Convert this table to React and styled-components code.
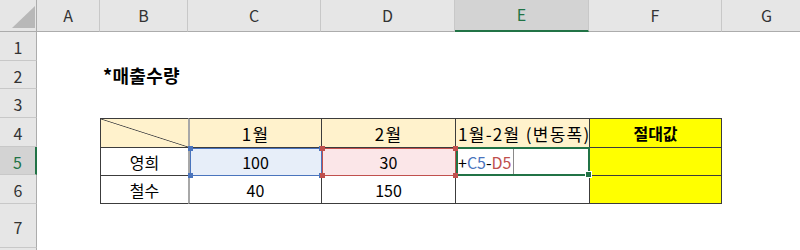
import React from 'react';
import styled, { createGlobalStyle } from 'styled-components';

const FONT = '"Noto Sans CJK KR", "Noto Sans", sans-serif';
const HEAD_FILL = '#FFF2CC';
const YELLOW = '#FFFF00';
const GREEN = '#217346';
const LINE = '1px solid #3c3c3c';
const SOFT_LINE = '2px solid #a8a8a8';
const BLUE = '#4a74bd';
const RED = '#c0504d';

const Global = createGlobalStyle`
  html, body { margin: 0; padding: 0; background: #fff; overflow: hidden; }
  body { font-family: ${FONT}; }
`;

const Sheet = styled.div`
  display: grid;
  grid-template-columns: 37px 63px 88px 133px 134px 134px 133px 90px;
  grid-template-rows: 32px 29px 28px 29px 29px 28px 29px 44px 29px;
  width: 800px;
  height: 250px;
  overflow: hidden;
  font-family: ${FONT};
`;

const Corner = styled.div`
  display: flex;
  justify-content: flex-end;
  align-items: flex-end;
  padding: 0 1px 3px 0;
  background: #e6e6e6;
  border-right: 1px solid #acacac;
  border-bottom: 1px solid #acacac;
`;

const ColHeader = styled.div`
  display: flex;
  align-items: center;
  justify-content: center;
  padding-bottom: 2px;
  background: ${p => (p.$selected ? '#d3d3d3' : '#e6e6e6')};
  color: ${p => (p.$selected ? GREEN : '#333')};
  font-size: 16px;
  border-right: 1px solid #c8c8c8;
  border-bottom: ${p => (p.$selected ? `2px solid ${GREEN}` : '1px solid #acacac')};
`;

const RowHeader = styled.div`
  display: flex;
  align-items: center;
  justify-content: center;
  padding-top: 2px;
  background: ${p => (p.$selected ? '#d3d3d3' : '#e6e6e6')};
  color: ${p => (p.$selected ? GREEN : '#333')};
  font-size: 16px;
  border-bottom: 1px solid #c8c8c8;
  border-right: ${p => (p.$selected ? `2px solid ${GREEN}` : '1px solid #acacac')};
`;

const Cell = styled.div`
  position: relative;
  display: flex;
  align-items: center;
  justify-content: ${p => (p.$align === 'left' ? 'flex-start' : 'center')};
  padding: 0 2px;
  min-width: 0;
  white-space: nowrap;
  color: #000;
  font-size: ${p => (p.$wide ? '17px' : '16px')};
  letter-spacing: ${p => (p.$wide ? '1.3px' : '0')};
  font-weight: ${p => (p.$bold ? 700 : 400)};
  background-color: ${p => p.$fill || 'transparent'};
  border-top: ${p => p.$top || 'none'};
  border-left: ${p => p.$left || 'none'};
  border-right: ${p => p.$right || 'none'};
  border-bottom: ${p => p.$bottom || 'none'};
`;

const DiagonalCell = styled(Cell)`
  background-image: linear-gradient(
    to top right,
    transparent calc(50% - 0.8px),
    #4a4a4a 50%,
    transparent calc(50% + 0.8px)
  );
`;

const Title = styled.span`
  padding-left: 1px;
  font-size: 18px;
  font-weight: 700;
  letter-spacing: 0.3px;
`;

const RefFrame = styled.span`
  position: absolute;
  top: 0;
  left: 0;
  right: -1px;
  bottom: -1px;
  border: 1px solid ${p => p.$color};
  z-index: 2;
  pointer-events: none;
`;

const Knob = styled.span`
  position: absolute;
  width: 5px;
  height: 5px;
  background: ${p => p.$color};
  ${p => p.$v}: -3px;
  ${p => p.$h}: -3px;
`;

const ActiveFrame = styled.span`
  position: absolute;
  top: -1px;
  left: 0;
  right: -1px;
  bottom: -1px;
  border: 2px solid ${GREEN};
  z-index: 1;
  pointer-events: none;
`;

const FillHandle = styled.span`
  position: absolute;
  right: -4px;
  bottom: -4px;
  width: 5px;
  height: 5px;
  background: ${GREEN};
  border: 1px solid #fff;
`;

const Token = styled.span`
  color: ${p => p.$color || '#000'};
`;

const Caret = styled.span`
  display: inline-block;
  width: 1px;
  height: 26px;
  margin-left: 2px;
  background: #8a8a8a;
`;

const Reference = ({ color }) => (
  <RefFrame $color={color}>
    <Knob $color={color} $v="top" $h="left" />
    <Knob $color={color} $v="top" $h="right" />
    <Knob $color={color} $v="bottom" $h="left" />
    <Knob $color={color} $v="bottom" $h="right" />
  </RefFrame>
);

const COLS = ['A', 'B', 'C', 'D', 'E', 'F', 'G'];
const ROWS = [1, 2, 3, 4, 5, 6, 7, 8];

const cells = {
  B2: { title: '*매출수량' },
  B4: { diagonal: true, fill: HEAD_FILL },
  C4: { text: '1월', fill: HEAD_FILL, wide: true },
  D4: { text: '2월', fill: HEAD_FILL, wide: true },
  E4: { text: '1월-2월 (변동폭)', fill: HEAD_FILL, align: 'left', wide: true },
  F4: { text: '절대값', fill: YELLOW, bold: true },
  B5: { text: '영희' },
  C5: { text: '100', fill: '#e7eef9', ref: BLUE },
  D5: { text: '30', fill: '#fbe6e8', ref: RED },
  E5: { formula: true, align: 'left' },
  F5: { fill: YELLOW },
  B6: { text: '철수' },
  C6: { text: '40' },
  D6: { text: '150' },
  F6: { fill: YELLOW },
};

// Outline of the B4:F6 block drawn by each cell's own edges
const edges = (col, row) => {
  if (row < 4 || row > 6 || col < 'B' || col > 'F') return {};
  return {
    $top: LINE,
    $left: col === 'C' ? SOFT_LINE : LINE,
    $right: col === 'F' ? LINE : undefined,
    $bottom: row === 6 ? LINE : undefined,
  };
};

const Formula = () => (
  <>
    <Token>+</Token>
    <Token $color={BLUE}>C5</Token>
    <Token>-</Token>
    <Token $color={RED}>D5</Token>
    <Caret />
  </>
);

const renderCell = (col, row) => {
  const key = `${col}${row}`;
  const c = cells[key] || {};
  const props = {
    key,
    $fill: c.fill,
    $align: c.align,
    $bold: c.bold,
    $wide: c.wide,
    ...edges(col, row),
  };
  if (c.diagonal) return <DiagonalCell {...props} />;
  return (
    <Cell {...props} $align={c.title ? 'left' : c.align}>
      {c.title && <Title>{c.title}</Title>}
      {c.text}
      {c.formula && <Formula />}
      {c.ref && <Reference color={c.ref} />}
      {c.formula && (
        <ActiveFrame>
          <FillHandle />
        </ActiveFrame>
      )}
    </Cell>
  );
};

export default function App() {
  return (
    <>
      <Global />
      <Sheet>
        <Corner>
          <svg width="23" height="22" viewBox="0 0 23 22">
            <polygon points="0,22 23,22 23,0" fill="#b8b8b8" />
          </svg>
        </Corner>
        {COLS.map(c => (
          <ColHeader key={c} $selected={c === 'E'}>
            {c}
          </ColHeader>
        ))}
        {ROWS.map(r => (
          <React.Fragment key={r}>
            <RowHeader $selected={r === 5}>{r < 8 ? r : null}</RowHeader>
            {COLS.map(c => renderCell(c, r))}
          </React.Fragment>
        ))}
      </Sheet>
    </>
  );
}
